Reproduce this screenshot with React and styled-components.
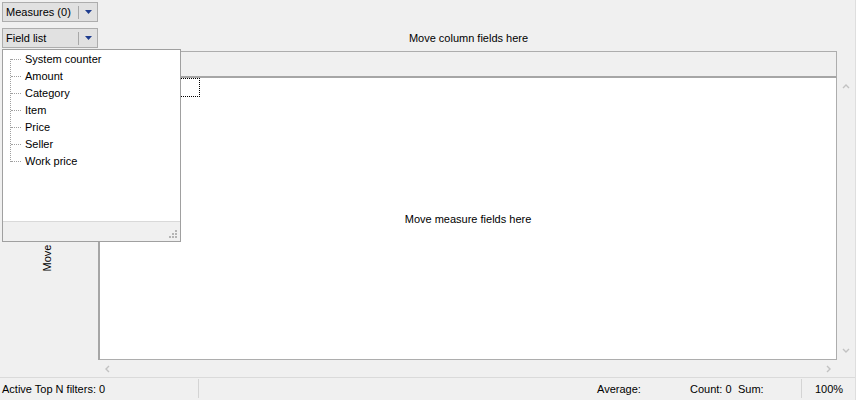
import React from 'react';
import styled, { createGlobalStyle } from 'styled-components';

const GlobalStyle = createGlobalStyle`
  html, body {
    margin: 0;
    padding: 0;
    background: #f0f0f0;
  }
  body {
    font-family: "Liberation Sans", Arial, sans-serif;
    font-size: 11px;
    color: #000;
  }
`;

const fields = ['System counter', 'Amount', 'Category', 'Item', 'Price', 'Seller', 'Work price'];

function Chevron({ dir }) {
  const points = {
    up: '1,5 4,2 7,5',
    down: '1,2 4,5 7,2',
    left: '5,1 2,4 5,7',
    right: '2,1 5,4 2,7',
  }[dir];
  return (
    <svg width="8" height="8" viewBox="0 0 8 8">
      <polyline points={points} fill="none" stroke="#c2c2c2" strokeWidth="1.4" />
    </svg>
  );
}

function DropDown({ label }) {
  return (
    <DropButton>
      <ButtonLabel>{label}</ButtonLabel>
      <ButtonSeparator />
      <ButtonArrow>
        <svg width="7" height="4" viewBox="0 0 7 4">
          <polygon points="0,0 7,0 3.5,4" fill="#1f3d8f" />
        </svg>
      </ButtonArrow>
    </DropButton>
  );
}

function App() {
  return (
    <>
      <GlobalStyle />
      <Window>
        <TopBar>
          <DropDown label="Measures (0)" />
        </TopBar>

        <PivotGrid>
          <FieldListCell>
            <DropDown label="Field list" />
          </FieldListCell>
          <ColumnDropArea>Move column fields here</ColumnDropArea>
          <Spacer />

          <Spacer />
          <ColumnHeader />
          <Spacer />

          <RowArea>
            <VerticalText>Move row fields here</VerticalText>
          </RowArea>
          <DataArea>
            <FocusCell />
            Move measure fields here
          </DataArea>
          <VScroll>
            <Chevron dir="up" />
            <Chevron dir="down" />
          </VScroll>

          <Spacer />
          <HScroll>
            <Chevron dir="left" />
            <Chevron dir="right" />
          </HScroll>
          <Spacer />
        </PivotGrid>

        <StatusBar>
          <StatusCell width="199px" divider>
            Active Top N filters: 0
          </StatusCell>
          <StatusCell width="391px" />
          <StatusCell width="93px" pad="7px">
            Average:
          </StatusCell>
          <StatusCell width="48px" pad="7px">
            Count: 0
          </StatusCell>
          <StatusCell width="70px" pad="7px">
            Sum:
          </StatusCell>
          <StatusCell width="55px" divider="left" center>
            100%
          </StatusCell>
        </StatusBar>

        {/* FIELD LIST POPUP */}
        <Popup>
          <TreeList>
            <TreeGroup>
              {fields.map((f) => (
                <TreeItem key={f}>{f}</TreeItem>
              ))}
            </TreeGroup>
          </TreeList>
          <PopupFooter>
            <svg width="9" height="9" viewBox="0 0 9 9">
              <rect x="6" y="0" width="2" height="2" fill="#b4b4b4" />
              <rect x="3" y="3" width="2" height="2" fill="#b4b4b4" />
              <rect x="6" y="3" width="2" height="2" fill="#b4b4b4" />
              <rect x="0" y="6" width="2" height="2" fill="#b4b4b4" />
              <rect x="3" y="6" width="2" height="2" fill="#b4b4b4" />
              <rect x="6" y="6" width="2" height="2" fill="#b4b4b4" />
            </svg>
          </PopupFooter>
        </Popup>
      </Window>
    </>
  );
}

const Window = styled.div`
  position: relative;
  width: 856px;
  height: 400px;
  overflow: hidden;
  background: #f0f0f0;
  box-sizing: border-box;
  border-right: 1px solid #dedede;
`;

const TopBar = styled.div`
  height: 26px;
  padding: 2px 0 0 2px;
  box-sizing: border-box;
`;

const DropButton = styled.div`
  display: flex;
  align-items: center;
  width: 96px;
  height: 20px;
  box-sizing: border-box;
  border: 1px solid #adadad;
  background: #e1e1e1;
`;

const ButtonLabel = styled.span`
  flex: 1;
  padding-left: 3px;
  white-space: nowrap;
`;

const ButtonSeparator = styled.span`
  width: 1px;
  height: 13px;
  background: #a8a8a8;
`;

const ButtonArrow = styled.span`
  display: flex;
  align-items: center;
  justify-content: center;
  width: 18px;
  height: 100%;
`;

const PivotGrid = styled.div`
  display: grid;
  grid-template-columns: 100px 737px 18px;
  grid-template-rows: 25px 27px 282px 17px;
`;

const Spacer = styled.div``;

const FieldListCell = styled.div`
  padding: 2px 0 0 2px;
`;

const ColumnDropArea = styled.div`
  display: flex;
  align-items: center;
  justify-content: center;
  padding-bottom: 1px;
`;

const ColumnHeader = styled.div`
  box-sizing: border-box;
  border-top: 1px solid #adadad;
  border-right: 1px solid #adadad;
  border-bottom: 2px solid #a6a6a6;
  background: #f0f0f0;
`;

const RowArea = styled.div`
  display: flex;
  align-items: center;
  justify-content: center;
  box-sizing: border-box;
  border-right: 2px solid #a6a6a6;
  padding: 3px 4px 0 0;
`;

const VerticalText = styled.span`
  writing-mode: vertical-rl;
  transform: rotate(180deg);
  white-space: nowrap;
`;

const DataArea = styled.div`
  position: relative;
  display: flex;
  align-items: center;
  justify-content: center;
  box-sizing: border-box;
  background: #fff;
  border-right: 1px solid #adadad;
  border-bottom: 1px solid #adadad;
`;

const FocusCell = styled.div`
  position: absolute;
  top: 0;
  left: 0;
  width: 100px;
  height: 19px;
  box-sizing: border-box;
  border: 1px dotted #000;
`;

const VScroll = styled.div`
  display: flex;
  flex-direction: column;
  align-items: center;
  justify-content: space-between;
  padding: 5px 0 5px 0;
`;

const HScroll = styled.div`
  display: flex;
  align-items: center;
  justify-content: space-between;
  padding: 0 4px 0 4px;
`;

const StatusBar = styled.div`
  display: flex;
  height: 23px;
  box-sizing: border-box;
  border-top: 1px solid #dadada;
  padding: 1px 0 2px;
`;

const StatusCell = styled.div`
  display: flex;
  align-items: center;
  justify-content: ${(p) => (p.center ? 'center' : 'flex-start')};
  width: ${(p) => p.width};
  flex-shrink: 0;
  box-sizing: border-box;
  padding-left: ${(p) => (p.divider === true ? '2px' : p.pad || '0')};
  white-space: nowrap;
  border-right: ${(p) => (p.divider === true ? '1px solid #d4d4d4' : 'none')};
  border-left: ${(p) => (p.divider === 'left' ? '1px solid #d4d4d4' : 'none')};
`;

const Popup = styled.div`
  position: absolute;
  left: 2px;
  top: 49px;
  width: 179px;
  height: 193px;
  box-sizing: border-box;
  border: 1px solid #a0a0a0;
  background: #fff;
  display: flex;
  flex-direction: column;
`;

const TreeList = styled.div`
  flex: 1;
  padding-top: 1px;
`;

const TreeGroup = styled.div`
  position: relative;
  &::before {
    content: '';
    position: absolute;
    left: 7px;
    top: 8px;
    bottom: 8px;
    border-left: 1px dotted #a0a0a0;
  }
`;

const TreeItem = styled.div`
  position: relative;
  height: 17px;
  line-height: 17px;
  padding-left: 22px;
  white-space: nowrap;
  &::before {
    content: '';
    position: absolute;
    left: 8px;
    top: 8px;
    width: 10px;
    border-top: 1px dotted #a0a0a0;
  }
`;

const PopupFooter = styled.div`
  display: flex;
  align-items: flex-end;
  justify-content: flex-end;
  flex-shrink: 0;
  height: 20px;
  box-sizing: border-box;
  border-top: 1px solid #d9d9d9;
  background: #f0f0f0;
  padding: 0 2px 2px 0;
`;

export default App;
